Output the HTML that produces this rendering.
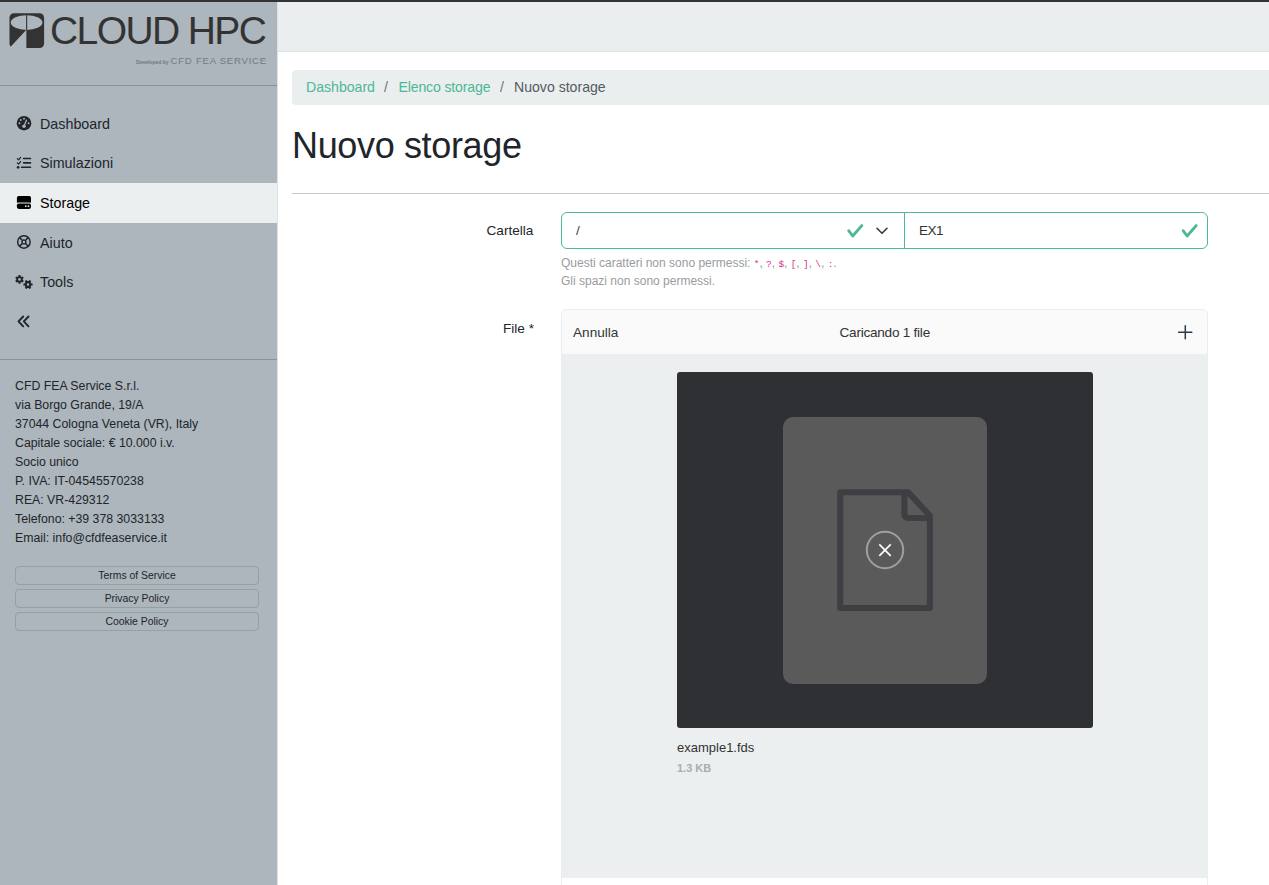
<!DOCTYPE html>
<html><head><meta charset="utf-8">
<style>
*{box-sizing:border-box;margin:0;padding:0}
html,body{width:1269px;height:885px;overflow:hidden;background:#fff;font-family:"Liberation Sans",sans-serif;color:#212529}
.abs{position:absolute;white-space:nowrap}
#topbar{left:0;top:0;width:1269px;height:2px;background:#333}
#sidebar{left:0;top:2px;width:277px;height:883px;background:#adb5bd}
.sep{position:absolute;left:0;width:277px;height:1px;background:#8a9199}
.tx{position:absolute;left:40px;line-height:40px;height:40px;font-size:14.3px;color:#212529;white-space:nowrap}
.foot{position:absolute;left:15px;top:377px;font-size:12.3px;line-height:19px;color:#212529;white-space:nowrap}
.btn{position:absolute;left:15px;width:244px;height:19px;border:1px solid #93a19f;border-radius:4px;font-size:10.4px;line-height:17px;text-align:center;color:#212529;white-space:nowrap}
#header{left:278px;top:2px;width:991px;height:50px;background:#eaeeef;border-bottom:1px solid #dcdfe5}
#mainborder{left:277px;top:2px;width:1px;height:883px;background:#dee2e6}
#crumb{left:292px;top:70px;width:990px;height:35px;background:#eaeeef;border-radius:4px}
.crumbt{position:absolute;line-height:35px;height:35px;font-size:14.1px;white-space:nowrap}
.green{color:#4db896}
.label{position:absolute;font-size:13.6px;line-height:20px;white-space:nowrap;color:#212529}
.help{position:absolute;left:561px;font-size:12px;line-height:18px;color:#979ca1;white-space:nowrap}
code{font-family:"Liberation Mono",monospace;color:#d63384;font-size:9.4px}
</style></head>
<body>
<div class="abs" id="topbar"></div>
<div class="abs" id="sidebar"></div>
<div class="sep" style="top:85px"></div>
<div class="sep" style="top:359px"></div>
<div class="abs" style="left:0;top:183px;width:277px;height:40px;background:#eceff0"></div>

<!-- logo -->
<svg class="abs" style="left:0;top:0" width="277" height="80" viewBox="0 0 277 80">
  <rect x="9.5" y="13.3" width="34.6" height="34.7" rx="4.5" fill="#333"/>
  <ellipse cx="26.6" cy="22.6" rx="15.8" ry="7.4" fill="#adb5bd"/>
  <polygon points="5.8,52 26.4,29.8 26.4,52" fill="#adb5bd"/>
  <rect x="26.1" y="14.5" width="1.1" height="15.5" fill="#333"/>
</svg>
<div class="abs" style="left:50px;top:6px;font-size:39px;line-height:50px;color:#333;letter-spacing:-1.6px">CLOUD HPC</div>
<div class="abs" style="left:136px;top:53px;color:#767a7f;line-height:12px"><span style="font-size:5.2px;font-weight:bold;letter-spacing:-0.1px">Developed by</span><span style="font-size:9.6px;letter-spacing:0.75px;margin-left:2px">CFD FEA SERVICE</span></div>

<!-- nav icons -->
<svg class="abs" style="left:0;top:0" width="277" height="340" viewBox="0 0 277 340">
  <g fill="#212529">
    <circle cx="24" cy="123.2" r="7.3"/>
  </g>
  <g fill="#adb5bd">
    <circle cx="24" cy="118.7" r="0.95"/>
    <circle cx="20.8" cy="120" r="0.95"/>
    <circle cx="19.45" cy="123.3" r="0.95"/>
    <circle cx="28.55" cy="123.3" r="0.95"/>
    <circle cx="24" cy="126.2" r="1.75"/>
  </g>
  <line x1="24" y1="126" x2="26.5" y2="120.2" stroke="#adb5bd" stroke-width="1.3" stroke-linecap="round"/>
  <!-- list check -->
  <g fill="none" stroke="#212529" stroke-width="1.25" stroke-linecap="round" stroke-linejoin="round">
    <polyline points="17.3,158.6 18.6,159.8 20.6,157.3"/>
    <polyline points="17.3,162.9 18.6,164.1 20.6,161.6"/>
  </g>
  <g stroke="#212529" stroke-width="1.6" stroke-linecap="round">
    <line x1="23.6" y1="158.5" x2="30.5" y2="158.5"/>
    <line x1="23.6" y1="162.9" x2="30.5" y2="162.9"/>
    <line x1="21.6" y1="167.3" x2="30.5" y2="167.3"/>
  </g>
  <circle cx="18.1" cy="167.3" r="1.35" fill="#212529"/>
  <!-- hdd -->
  <path d="M16.9 197.8 Q16.9 196 18.7 196 H29.2 Q31 196 31 197.8 V202.8 Q30 202.5 28.9 202.5 H19 Q17.9 202.5 16.9 202.8Z" fill="#000"/>
  <rect x="16.9" y="203.5" width="14.1" height="5.4" rx="1.8" fill="#000"/>
  <circle cx="25.8" cy="206.2" r="0.85" fill="#e9ecef"/>
  <circle cx="28.5" cy="206.2" r="0.85" fill="#e9ecef"/>
  <!-- life ring -->
  <g fill="none" stroke="#212529">
    <circle cx="23.9" cy="241.9" r="6.25" stroke-width="1.45"/>
    <circle cx="23.9" cy="241.9" r="1.95" stroke-width="1.4"/>
    <g stroke-width="1.5">
      <line x1="21.9" y1="239.9" x2="19.2" y2="237.2"/>
      <line x1="25.9" y1="239.9" x2="28.6" y2="237.2"/>
      <line x1="21.9" y1="243.9" x2="19.2" y2="246.6"/>
      <line x1="25.9" y1="243.9" x2="28.6" y2="246.6"/>
    </g>
  </g>
  <!-- cogs -->
  <path fill="#212529" fill-rule="evenodd" d="M20.57 276.28 L20.47 275.06 L18.53 275.06 L18.43 276.28 L17.33 276.91 L16.22 276.39 L15.25 278.07 L16.26 278.76 L16.26 280.04 L15.25 280.73 L16.22 282.41 L17.33 281.89 L18.43 282.52 L18.53 283.74 L20.47 283.74 L20.57 282.52 L21.67 281.89 L22.78 282.41 L23.75 280.73 L22.74 280.04 L22.74 278.76 L23.75 278.07 L22.78 276.39 L21.67 276.91Z M18.20 279.40 a1.30 1.30 0 1 0 2.60 0 a1.30 1.30 0 1 0 -2.60 0Z"/>
  <path fill="#212529" fill-rule="evenodd" d="M31.26 285.62 L32.59 285.53 L32.59 283.47 L31.26 283.38 L30.60 282.23 L31.18 281.04 L29.41 280.02 L28.66 281.11 L27.34 281.11 L26.59 280.02 L24.82 281.04 L25.40 282.23 L24.74 283.38 L23.41 283.47 L23.41 285.53 L24.74 285.62 L25.40 286.77 L24.82 287.96 L26.59 288.98 L27.34 287.89 L28.66 287.89 L29.41 288.98 L31.18 287.96 L30.60 286.77Z M26.75 284.50 a1.25 1.25 0 1 0 2.50 0 a1.25 1.25 0 1 0 -2.50 0Z"/>
  <!-- chevrons -->
  <g fill="none" stroke="#212529" stroke-width="1.9" stroke-linecap="round" stroke-linejoin="round">
    <polyline points="23.2,316.5 18.5,321.4 23.2,326.3"/>
    <polyline points="28.5,316.5 23.8,321.4 28.5,326.3"/>
  </g>
</svg>

<div class="tx" style="top:104px">Dashboard</div>
<div class="tx" style="top:143px">Simulazioni</div>
<div class="tx" style="top:183px;color:#000">Storage</div>
<div class="tx" style="top:223px">Aiuto</div>
<div class="tx" style="top:262px">Tools</div>

<div class="foot">CFD FEA Service S.r.l.<br>via Borgo Grande, 19/A<br>37044 Cologna Veneta (VR), Italy<br>Capitale sociale: € 10.000 i.v.<br>Socio unico<br>P. IVA: IT-04545570238<br>REA: VR-429312<br>Telefono: +39 378 3033133<br>Email: info@cfdfeaservice.it</div>
<div class="btn" style="top:566px">Terms of Service</div>
<div class="btn" style="top:589px">Privacy Policy</div>
<div class="btn" style="top:612px">Cookie Policy</div>

<!-- main -->
<div class="abs" id="mainborder"></div>
<div class="abs" id="header"></div>
<div class="abs" id="crumb"></div>
<div class="crumbt green" style="left:306px;top:70px">Dashboard</div>
<div class="crumbt" style="left:384px;top:70px;color:#6c757d">/</div>
<div class="crumbt green" style="left:398.5px;top:70px;letter-spacing:-0.15px">Elenco storage</div>
<div class="crumbt" style="left:500px;top:70px;color:#6c757d">/</div>
<div class="crumbt" style="left:514px;top:70px;color:#555b61">Nuovo storage</div>
<div class="abs" style="left:292px;top:123.5px;font-size:36px;line-height:44px;color:#212529;letter-spacing:-0.35px">Nuovo storage</div>
<div class="abs" style="left:292px;top:193px;width:977px;height:1px;background:#c8c9ca"></div>

<!-- form row 1 -->
<div class="label" style="left:486.5px;top:221px">Cartella</div>
<div class="abs" style="left:561px;top:212px;width:647px;height:37px;border:1px solid #4db896;border-radius:6px;background:#fff"></div>
<div class="abs" style="left:904px;top:212px;width:1px;height:37px;background:#4db896"></div>
<div class="label" style="left:576px;top:221px;color:#444">/</div>
<div class="label" style="left:919px;top:221px;color:#333;letter-spacing:-0.6px">EX1</div>
<svg class="abs" style="left:0;top:0;overflow:visible" width="1269" height="360" viewBox="0 0 1269 360">
  <g fill="none" stroke="#4db896" stroke-width="2.9" stroke-linecap="round" stroke-linejoin="round">
    <polyline points="848.7,230.7 852.7,236 861.8,225.6"/>
    <polyline points="1183.1,230.7 1187.1,236 1196.2,225.6"/>
  </g>
  <polyline points="877,228.3 882,233.3 887,228.3" fill="none" stroke="#343a40" stroke-width="1.6" stroke-linecap="round" stroke-linejoin="round"/>
</svg>
<div class="help" style="top:254px">Questi caratteri non sono permessi: <code>*</code>, <code>?</code>, <code>$</code>, <code>[</code>, <code>]</code>, <code>\</code>, <code>:</code>.</div>
<div class="help" style="top:271.5px">Gli spazi non sono permessi.</div>

<!-- dropzone -->
<div class="label" style="left:503px;top:318.5px">File *</div>
<div class="abs" style="left:561px;top:309px;width:647px;height:620px;border:1px solid #eaecee;border-radius:5px;background:#fff"></div>
<div class="abs" style="left:562px;top:310px;width:645px;height:44px;background:#fafafa;border-radius:4px 4px 0 0"></div>
<div class="abs" style="left:562px;top:354px;width:645px;height:524px;background:#ebeff0"></div>
<div class="label" style="left:573px;top:322.5px;color:#333">Annulla</div>
<div class="label" style="left:839.5px;top:322.5px;color:#333;letter-spacing:-0.25px">Caricando 1 file</div>
<svg class="abs" style="left:1170px;top:318px" width="30" height="30" viewBox="1170 318 30 30">
  <g stroke="#2e3a47" stroke-width="1.5" stroke-linecap="round"><line x1="1178.7" y1="332.2" x2="1191.8" y2="332.2"/><line x1="1185.3" y1="325.7" x2="1185.3" y2="338.8"/></g>
</svg>
<div class="abs" style="left:677px;top:372px;width:416px;height:356px;background:#2f3034;border-radius:3px"></div>
<div class="abs" style="left:783px;top:417px;width:204px;height:267px;background:#5a5a5a;border-radius:10px"></div>
<svg class="abs" style="left:783px;top:417px" width="204" height="267" viewBox="783 417 204 267">
  <path d="M840.2 492.2 H908 L929.9 515.5 V608 H840.2 Z" fill="none" stroke="#3e3f43" stroke-width="6.1" stroke-linejoin="round"/>
  <path d="M904.4 492.2 V514 Q904.4 518 908.4 518 H929.9" fill="none" stroke="#3e3f43" stroke-width="6.1"/>
  <circle cx="885" cy="550" r="18.2" fill="none" stroke="#9f9f9f" stroke-width="2"/>
  <g stroke="#fff" stroke-width="1.7"><line x1="879.3" y1="544.4" x2="890.7" y2="555.8"/><line x1="890.7" y1="544.4" x2="879.3" y2="555.8"/></g>
</svg>
<div class="abs" style="left:677px;top:739px;font-size:13px;line-height:18px;color:#333">example1.fds</div>
<div class="abs" style="left:677px;top:760px;font-size:11px;line-height:16px;color:#a7adb1;font-weight:bold">1.3 KB</div>
</body></html>
